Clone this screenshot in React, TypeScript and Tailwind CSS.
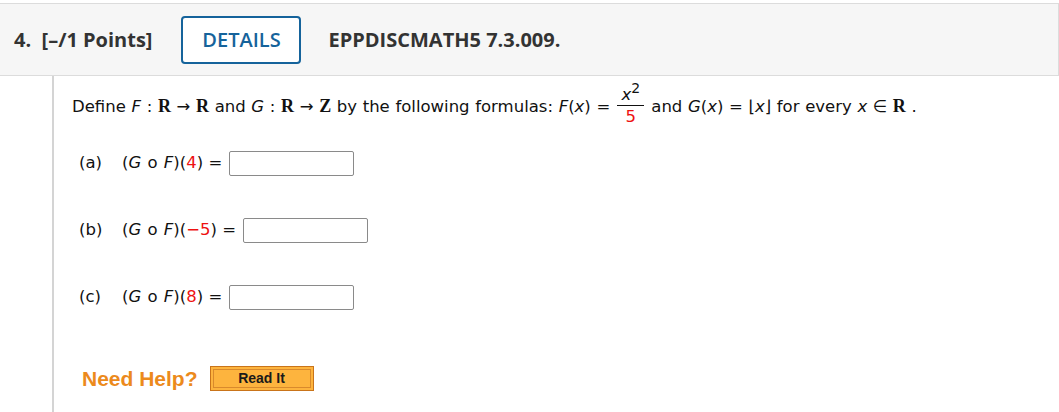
import React from "react"

const serif = { fontFamily: '"Liberation Serif", serif' }

function Bold({ children }: { children: React.ReactNode }) {
  return (
    <span className="font-bold text-[18px]" style={serif}>
      {children}
    </span>
  )
}

function Answer({ label, arg }: { label: string; arg: string }) {
  return (
    <div className="flex items-center">
      <span className="w-[43px]">({label})</span>
      <span>
        (<i>G</i> <span className="mx-[1px]">o</span> <i>F</i>)(<span className="text-[#ee1111]">{arg}</span>) =
      </span>
      <input type="text" className="ml-[7px] h-[25px] w-[125px] rounded-[2px] border border-[#8a8a8a] bg-white" />
    </div>
  )
}

export default function App() {
  return (
    <div className="h-[412px] w-[1059px] overflow-hidden bg-white">
      <div
        className="mt-[3px] flex h-[73px] w-[1059px] items-center border-y border-r border-[#dcdcdc] bg-[#f6f6f6] text-[20px] font-bold text-[#333]"
        style={{ fontFamily: '"Open Sans", sans-serif' }}
      >
        <span className="ml-[14px] whitespace-pre">4.  [–/1 Points]</span>
        <button className="ml-[29px] h-[48px] w-[120px] rounded-[4px] border-2 border-[#15639b] bg-white text-[20px] font-semibold text-[#15639b]">
          DETAILS
        </button>
        <span className="ml-[27px]">EPPDISCMATH5 7.3.009.</span>
      </div>
      <div
        className="ml-[52px] h-[336px] border-l-2 border-[#d4d4d4] pl-[18px] text-[16.5px] text-[#111]"
        style={{ fontFamily: '"DejaVu Sans", Verdana, sans-serif' }}
      >
        <div className="flex items-center pt-[9px] [word-spacing:0.4px]">
          <span>
            Define <i>F</i> : <Bold>R</Bold> → <Bold>R</Bold> and <i>G</i> : <Bold>R</Bold> → <Bold>Z</Bold> by the following formulas: <i>F</i>(<i>x</i>) =
          </span>
          <span className="mx-[7px] inline-flex flex-col items-center">
            <span className="px-[2px] leading-[20px]">
              <i>x</i>
              <sup className="text-[14px]">2</sup>
            </span>
            <span className="h-px w-[27px] bg-[#111]" />
            <span className="leading-[22px] text-[#ee1111]">5</span>
          </span>
          <span>
            and <i>G</i>(<i>x</i>) = ⌊<i>x</i>⌋ for every <i>x</i> ∈ <Bold>R</Bold> .
          </span>
        </div>
        <div className="mt-[23px] ml-[7px] flex flex-col gap-[42px]">
          <Answer label="a" arg="4" />
          <Answer label="b" arg="−5" />
          <Answer label="c" arg="8" />
        </div>
        <div className="mt-[53px] ml-[10px] flex items-center">
          <span className="text-[21px] font-bold text-[#ec8a1c]" style={{ fontFamily: '"Liberation Sans", Arial, sans-serif' }}>
            Need Help?
          </span>
          <button
            className="ml-[12px] h-[25px] w-[104px] border border-[#c9741a] bg-[#fdb43e] p-[2px]"
            style={{ fontFamily: '"Liberation Sans", Arial, sans-serif' }}
          >
            <span className="flex h-full w-full items-center justify-center border border-[#d98a2c] text-[14px] font-bold text-[#1a1a1a]">
              Read It
            </span>
          </button>
        </div>
      </div>
    </div>
  )
}
